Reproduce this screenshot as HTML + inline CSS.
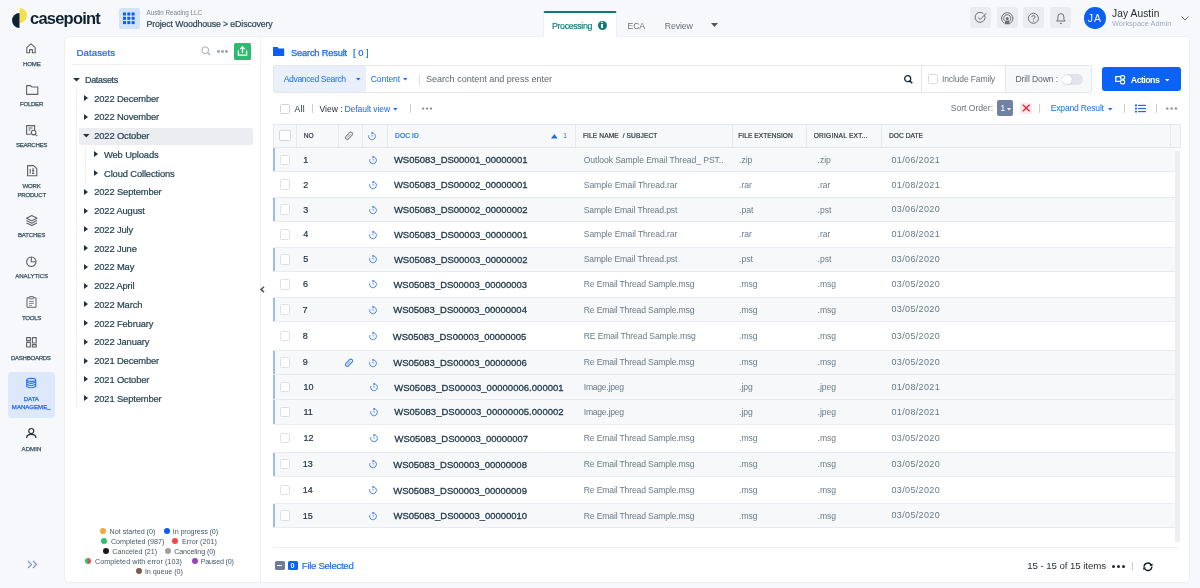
<!DOCTYPE html>
<html><head><meta charset="utf-8">
<style>
*{box-sizing:border-box;margin:0;padding:0}
html,body{width:1200px;height:588px;overflow:hidden;background:#f6f8fb;font-family:"Liberation Sans",sans-serif;color:#1f3647}
.a{position:absolute;white-space:pre}
svg.a{overflow:visible}
</style></head><body>
<div class="a" style="left:63.5px;top:36.2px;width:1126.0px;height:546.5999999999999px;background:#fff;border:1px solid #eceff3;border-radius:5px"></div>
<div class="a" style="left:260px;top:37px;width:1px;height:545px;background:#eef0f3"></div>
<svg class="a" style="left:11px;top:7px" width="18" height="22" viewBox="0 0 18 22"><path d="M8.5 1 A7.5 7.5 0 0 1 8.5 16 Z" fill="#f3e04a"/><path d="M8.5 6 A7.5 7.5 0 0 0 8.5 21 Z" fill="#0f2233"/></svg>
<div class="a" style="left:118.5px;top:7.5px;width:21.0px;height:21.0px;background:#d3e3fb;border-radius:2px"></div>
<svg class="a" style="left:118.3px;top:7.3px" width="21" height="21" viewBox="0 0 21 21"><g fill="#0a5cf5"><rect x="5.0" y="5.5" width="3" height="3"/><rect x="5.0" y="9.8" width="3" height="3"/><rect x="5.0" y="14.1" width="3" height="3"/><rect x="9.3" y="5.5" width="3" height="3"/><rect x="9.3" y="9.8" width="3" height="3"/><rect x="9.3" y="14.1" width="3" height="3"/><rect x="13.6" y="5.5" width="3" height="3"/><rect x="13.6" y="9.8" width="3" height="3"/><rect x="13.6" y="14.1" width="3" height="3"/></g></svg>
<div class="a" style="left:542.5px;top:11px;width:74.5px;height:26px;background:#fff;border-top:2px solid #0e7b78;border-left:1px solid #eef0f3;border-right:1px solid #eef0f3;border-radius:2px 2px 0 0"></div>
<div class="a" style="left:597.5px;top:20.5px;width:9px;height:9px;border-radius:50%;background:#0e7b78"></div>
<div class="a" style="left:601.3px;top:24px;width:1.400000000000091px;height:3.6000000000000014px;background:#fff"></div>
<div class="a" style="left:601.3px;top:22.2px;width:1.400000000000091px;height:1.1999999999999993px;background:#fff"></div>
<svg class="a" style="left:710.5px;top:23px" width="7" height="4" viewBox="0 0 7 4"><path d="M0 0 L7 0 L3.5 4 Z" fill="#50575e"/></svg>
<div class="a" style="left:970px;top:7.4px;width:21px;height:20.799999999999997px;background:#ebecef;border-radius:3px"></div>
<div class="a" style="left:996.6px;top:7.4px;width:21.0px;height:20.799999999999997px;background:#ebecef;border-radius:3px"></div>
<div class="a" style="left:1023px;top:7.4px;width:21px;height:20.799999999999997px;background:#ebecef;border-radius:3px"></div>
<div class="a" style="left:1050px;top:7.4px;width:21px;height:20.799999999999997px;background:#ebecef;border-radius:3px"></div>
<svg class="a" style="left:974.5px;top:12.3px" width="12" height="11" viewBox="0 0 12 11"><path d="M9.6 3.2 A5 5 0 1 1 8.4 1.6" fill="none" stroke="#6a6e73" stroke-width="1"/><path d="M3.2 5.6 L5.2 7.5 L11.2 1.2" fill="none" stroke="#6a6e73" stroke-width="1"/></svg>
<svg class="a" style="left:1000.8px;top:11.6px" width="12.5" height="12.5" viewBox="0 0 12.5 12.5"><path d="M3.2 11.2 A5.7 5.7 0 1 1 9.3 11.2" fill="none" stroke="#6a6e73" stroke-width="1"/><path d="M4.2 9.3 A3.6 3.6 0 1 1 8.3 9.3" fill="none" stroke="#6a6e73" stroke-width="1"/><circle cx="6.25" cy="6.6" r="1.5" fill="#6a6e73"/><path d="M3.6 12.3 L4.4 8.6 L8.1 8.6 L8.9 12.3 Z" fill="#6a6e73"/></svg>
<svg class="a" style="left:1028px;top:12.6px" width="11" height="11" viewBox="0 0 11 11"><circle cx="5.4" cy="5.3" r="5" fill="none" stroke="#6a6e73" stroke-width="1"/><path d="M3.8 4.2 Q3.8 2.5 5.4 2.5 Q7.1 2.5 7.1 4 Q7.1 5.1 5.6 5.6 L5.4 6.6" fill="none" stroke="#6a6e73" stroke-width="1"/><circle cx="5.4" cy="8.2" r="0.6" fill="#6a6e73"/></svg>
<svg class="a" style="left:1055.5px;top:12.6px" width="10" height="10.5" viewBox="0 0 10 10.5"><path d="M0.6 8 L9.2 8 L7.9 6.4 L7.9 4 Q7.9 0.6 4.9 0.6 Q1.9 0.6 1.9 4 L1.9 6.4 Z" fill="none" stroke="#6a6e73" stroke-width="1"/><path d="M3.9 10.3 L5.9 10.3" fill="none" stroke="#6a6e73" stroke-width="1"/></svg>
<div class="a" style="left:1084px;top:7px;width:21.6px;height:21.6px;border-radius:50%;background:#0b60f3"></div>
<svg class="a" style="left:1181px;top:15.5px" width="8" height="5" viewBox="0 0 8 5"><path d="M0.5 0.5 L4 4 L7.5 0.5" fill="none" stroke="#5c6670" stroke-width="1"/></svg>
<svg class="a" style="left:26.4px;top:42.8px" width="10" height="10.5" viewBox="0 0 10 10.5"><path d="M0.8 4.6 L5 0.8 L9.2 4.6 L9.2 9.8 L6.4 9.8 L6.4 6.6 L3.6 6.6 L3.6 9.8 L0.8 9.8 Z" fill="none" stroke="#5e6266" stroke-width="1.1" stroke-linejoin="round"/></svg>
<svg class="a" style="left:25.5px;top:84.5px" width="12.5" height="10" viewBox="0 0 12.5 10"><path d="M0.6 0.6 L4.6 0.6 L5.8 2 L11.8 2 L11.8 9.4 L0.6 9.4 Z" fill="none" stroke="#5e6266" stroke-width="1.1" stroke-linejoin="round"/></svg>
<svg class="a" style="left:26px;top:125px" width="12" height="11.5" viewBox="0 0 12 11.5"><path d="M8.6 5 L8.6 0.6 L0.6 0.6 L0.6 9.2 L4.8 9.2" fill="none" stroke="#5e6266" stroke-width="1.1" stroke-linejoin="round"/><path d="M2.5 3 L6.5 3 M2.5 5 L4.5 5" fill="none" stroke="#5e6266" stroke-width="1.1" stroke-linejoin="round"/><circle cx="7.6" cy="7.6" r="2.3" fill="none" stroke="#5e6266" stroke-width="1.1" stroke-linejoin="round"/><path d="M9.3 9.3 L11.2 11.2" fill="none" stroke="#5e6266" stroke-width="1.1" stroke-linejoin="round"/></svg>
<svg class="a" style="left:26.7px;top:165px" width="10.5" height="11.5" viewBox="0 0 10.5 11.5"><path d="M0.6 0.6 L6.6 0.6 L9.8 3.6 L9.8 10.8 L0.6 10.8 Z" fill="none" stroke="#5e6266" stroke-width="1.1" stroke-linejoin="round"/><path d="M3.2 4 L3.2 8.4 M5 4 L7.2 4 M5 5.5 L7.2 5.5 M5 7 L7.2 7 M5 8.5 L7.2 8.5" fill="none" stroke="#5e6266" stroke-width="1.1" stroke-linejoin="round"/></svg>
<svg class="a" style="left:26px;top:214.5px" width="11.5" height="11.5" viewBox="0 0 11.5 11.5"><path d="M5.75 0.6 L11 3.2 L5.75 5.8 L0.5 3.2 Z" fill="none" stroke="#5e6266" stroke-width="1.1" stroke-linejoin="round"/><path d="M0.5 5.6 L5.75 8.2 L11 5.6 M0.5 8 L5.75 10.6 L11 8" fill="none" stroke="#5e6266" stroke-width="1.1" stroke-linejoin="round"/></svg>
<svg class="a" style="left:25.9px;top:255.8px" width="11" height="11" viewBox="0 0 11 11"><circle cx="5.3" cy="5.7" r="4.7" fill="none" stroke="#5e6266" stroke-width="1.1" stroke-linejoin="round"/><path d="M5.3 1 L5.3 5.7 L10 5.7" fill="none" stroke="#5e6266" stroke-width="1.1" stroke-linejoin="round"/></svg>
<svg class="a" style="left:26.4px;top:296px" width="11" height="12" viewBox="0 0 11 12"><path d="M3 1.8 L1 1.8 L1 11.3 L10 11.3 L10 1.8 L8 1.8" fill="none" stroke="#5e6266" stroke-width="1"/><rect x="3.3" y="0.6" width="4.4" height="2.2" rx="0.5" fill="none" stroke="#5e6266" stroke-width="1"/><path d="M3.2 5.4 L7.8 5.4 M3.2 7.4 L7.8 7.4 M3.2 9.4 L5.8 9.4" fill="none" stroke="#5e6266" stroke-width="0.8"/></svg>
<svg class="a" style="left:25.9px;top:337.3px" width="11" height="10.5" viewBox="0 0 11 10.5"><rect x="0.6" y="0.6" width="3.8" height="3" fill="none" stroke="#5e6266" stroke-width="1.1" stroke-linejoin="round"/><rect x="6.4" y="0.6" width="3.8" height="5.4" fill="none" stroke="#5e6266" stroke-width="1.1" stroke-linejoin="round"/><rect x="0.6" y="5.4" width="3.8" height="4.6" fill="none" stroke="#5e6266" stroke-width="1.1" stroke-linejoin="round"/><rect x="6.4" y="7.6" width="3.8" height="2.4" fill="none" stroke="#5e6266" stroke-width="1.1" stroke-linejoin="round"/></svg>
<div class="a" style="left:8.2px;top:371.9px;width:46.599999999999994px;height:46.30000000000001px;background:#dde8fb;border-radius:4px"></div>
<svg class="a" style="left:26.4px;top:378.4px" width="10.5" height="10.5" viewBox="0 0 10.5 10.5"><ellipse cx="5.2" cy="1.9" rx="4.5" ry="1.5" fill="none" stroke="#2a6ff0" stroke-width="1.1"/><path d="M0.7 1.9 L0.7 8.4 Q5.2 11 9.7 8.4 L9.7 1.9 M0.7 4.1 Q5.2 6.6 9.7 4.1 M0.7 6.3 Q5.2 8.8 9.7 6.3" fill="none" stroke="#2a6ff0" stroke-width="1.1"/></svg>
<svg class="a" style="left:26.4px;top:428px" width="10.5" height="10.5" viewBox="0 0 10.5 10.5"><circle cx="5.25" cy="3" r="2.5" fill="none" stroke="#23313c" stroke-width="1.2"/><path d="M0.6 10 Q0.6 6.4 5.25 6.4 Q9.9 6.4 9.9 10" fill="none" stroke="#23313c" stroke-width="1.2"/></svg>
<svg class="a" style="left:26.5px;top:560px" width="11" height="9" viewBox="0 0 11 9"><path d="M1 1 L4.5 4.5 L1 8 M6 1 L9.5 4.5 L6 8" fill="none" stroke="#7d92c2" stroke-width="1.1"/></svg>
<svg class="a" style="left:201px;top:46.3px" width="10" height="10" viewBox="0 0 10 10"><circle cx="4.2" cy="4.2" r="3.4" fill="none" stroke="#a4aab3" stroke-width="1"/><path d="M6.7 6.7 L9 9" stroke="#a4aab3" stroke-width="1.1"/></svg>
<div class="a" style="left:217.2px;top:49.8px;width:2.8px;height:2.8px;border-radius:50%;background:#a0a7b1"></div>
<div class="a" style="left:221.0px;top:49.8px;width:2.8px;height:2.8px;border-radius:50%;background:#a0a7b1"></div>
<div class="a" style="left:224.8px;top:49.8px;width:2.8px;height:2.8px;border-radius:50%;background:#a0a7b1"></div>
<div class="a" style="left:234px;top:43.3px;width:17px;height:16.400000000000006px;background:#2fbb6f;border-radius:1.5px"></div>
<svg class="a" style="left:234px;top:43.3px" width="17" height="16.4" viewBox="0 0 17 16.4"><path d="M4.4 7.6 L4.4 12.2 L12.6 12.2 L12.6 7.6" fill="none" stroke="#fff" stroke-width="1.3"/><path d="M8.5 10 L8.5 4 M6.2 6.1 L8.5 3.8 L10.8 6.1" fill="none" stroke="#fff" stroke-width="1.3"/></svg>
<div class="a" style="left:72px;top:64px;width:178px;height:1px;background:#eceef1"></div>
<svg class="a" style="left:72.5px;top:78.3px" width="7" height="4" viewBox="0 0 7 4"><path d="M0 0 L7 0 L3.5 3.5 Z" fill="#1e3443"/></svg>
<div class="a" style="left:76px;top:89px;width:1px;height:318px;background:#f0f1f3"></div>
<div class="a" style="left:79.2px;top:127.6px;width:173.8px;height:17.30000000000001px;background:#ebedf0;border-radius:2px"></div>
<div class="a" style="left:85px;top:145.5px;width:1px;height:37.5px;background:#f0f1f3"></div>
<svg class="a" style="left:84.2px;top:95.2px" width="4.2" height="6" viewBox="0 0 4.2 6"><path d="M0 0 L4 3 L0 6 Z" fill="#1e3443"/></svg>
<svg class="a" style="left:84.2px;top:113.95px" width="4.2" height="6" viewBox="0 0 4.2 6"><path d="M0 0 L4 3 L0 6 Z" fill="#1e3443"/></svg>
<svg class="a" style="left:82.5px;top:133.89999999999998px" width="6.5" height="4" viewBox="0 0 6.5 4"><path d="M0 0 L6.5 0 L3.25 3.5 Z" fill="#1e3443"/></svg>
<svg class="a" style="left:93.5px;top:151.45px" width="4.2" height="6" viewBox="0 0 4.2 6"><path d="M0 0 L4 3 L0 6 Z" fill="#1e3443"/></svg>
<svg class="a" style="left:93.5px;top:170.2px" width="4.2" height="6" viewBox="0 0 4.2 6"><path d="M0 0 L4 3 L0 6 Z" fill="#1e3443"/></svg>
<svg class="a" style="left:84.2px;top:188.95px" width="4.2" height="6" viewBox="0 0 4.2 6"><path d="M0 0 L4 3 L0 6 Z" fill="#1e3443"/></svg>
<svg class="a" style="left:84.2px;top:207.7px" width="4.2" height="6" viewBox="0 0 4.2 6"><path d="M0 0 L4 3 L0 6 Z" fill="#1e3443"/></svg>
<svg class="a" style="left:84.2px;top:226.45px" width="4.2" height="6" viewBox="0 0 4.2 6"><path d="M0 0 L4 3 L0 6 Z" fill="#1e3443"/></svg>
<svg class="a" style="left:84.2px;top:245.2px" width="4.2" height="6" viewBox="0 0 4.2 6"><path d="M0 0 L4 3 L0 6 Z" fill="#1e3443"/></svg>
<svg class="a" style="left:84.2px;top:263.95px" width="4.2" height="6" viewBox="0 0 4.2 6"><path d="M0 0 L4 3 L0 6 Z" fill="#1e3443"/></svg>
<svg class="a" style="left:84.2px;top:282.7px" width="4.2" height="6" viewBox="0 0 4.2 6"><path d="M0 0 L4 3 L0 6 Z" fill="#1e3443"/></svg>
<svg class="a" style="left:84.2px;top:301.45px" width="4.2" height="6" viewBox="0 0 4.2 6"><path d="M0 0 L4 3 L0 6 Z" fill="#1e3443"/></svg>
<svg class="a" style="left:84.2px;top:320.2px" width="4.2" height="6" viewBox="0 0 4.2 6"><path d="M0 0 L4 3 L0 6 Z" fill="#1e3443"/></svg>
<svg class="a" style="left:84.2px;top:338.95px" width="4.2" height="6" viewBox="0 0 4.2 6"><path d="M0 0 L4 3 L0 6 Z" fill="#1e3443"/></svg>
<svg class="a" style="left:84.2px;top:357.7px" width="4.2" height="6" viewBox="0 0 4.2 6"><path d="M0 0 L4 3 L0 6 Z" fill="#1e3443"/></svg>
<svg class="a" style="left:84.2px;top:376.45px" width="4.2" height="6" viewBox="0 0 4.2 6"><path d="M0 0 L4 3 L0 6 Z" fill="#1e3443"/></svg>
<svg class="a" style="left:84.2px;top:395.2px" width="4.2" height="6" viewBox="0 0 4.2 6"><path d="M0 0 L4 3 L0 6 Z" fill="#1e3443"/></svg>
<svg class="a" style="left:259.5px;top:285.8px" width="5" height="7" viewBox="0 0 5 7"><path d="M4 0.7 L1 3.4 L4 6.1" fill="none" stroke="#4d535c" stroke-width="1.5"/></svg>
<div class="a" style="left:99.8px;top:528.3px;width:6px;height:6px;border-radius:50%;background:#f5a83c"></div>
<div class="a" style="left:163.6px;top:528.3px;width:6px;height:6px;border-radius:50%;background:#0b5cf5"></div>
<div class="a" style="left:101px;top:538.2px;width:6px;height:6px;border-radius:50%;background:#2fbf71"></div>
<div class="a" style="left:172.4px;top:538.2px;width:6px;height:6px;border-radius:50%;background:#f2484b"></div>
<div class="a" style="left:103px;top:548.2px;width:6px;height:6px;border-radius:50%;background:#1a1a1a"></div>
<div class="a" style="left:164.7px;top:548.2px;width:6px;height:6px;border-radius:50%;background:#a39e96"></div>
<div class="a" style="left:85.4px;top:558.4px;width:6px;height:6px;border-radius:50%;background:linear-gradient(90deg,#2fbf71 50%,#f2484b 50%)"></div>
<div class="a" style="left:191.9px;top:558.4px;width:6px;height:6px;border-radius:50%;background:#9b3fc2"></div>
<div class="a" style="left:136px;top:568.3px;width:6px;height:6px;border-radius:50%;background:#7d5d4f"></div>
<svg class="a" style="left:273px;top:47px" width="11.2" height="9" viewBox="0 0 11.2 9"><path d="M0 0 L4.6 0 L5.6 1.6 L11.2 1.6 L11.2 9 L0 9 Z" fill="#0b5cf5"/></svg>
<div class="a" style="left:273px;top:65px;width:819px;height:27.5px;border:1px solid #e4e7eb;border-radius:2px;background:#fff"></div>
<div class="a" style="left:274px;top:66px;width:92px;height:25.5px;background:#e9f0fc"></div>
<svg class="a" style="left:355.5px;top:78px" width="4.5" height="3" viewBox="0 0 4.5 3"><path d="M0 0 L4.5 0 L2.25 2.6 Z" fill="#1e6bef"/></svg>
<svg class="a" style="left:402.5px;top:78px" width="4.5" height="3" viewBox="0 0 4.5 3"><path d="M0 0 L4.5 0 L2.25 2.6 Z" fill="#1e6bef"/></svg>
<div class="a" style="left:418.5px;top:74px;width:0.8000000000000114px;height:12px;background:#dfe2e6"></div>
<svg class="a" style="left:903.8px;top:75px" width="9" height="9" viewBox="0 0 9 9"><circle cx="3.7" cy="3.7" r="3" fill="none" stroke="#1b2a36" stroke-width="1.3"/><path d="M5.9 5.9 L8.3 8.3" stroke="#1b2a36" stroke-width="1.5"/></svg>
<div class="a" style="left:921px;top:66px;width:1px;height:25.5px;background:#e4e7eb"></div>
<div class="a" style="left:928px;top:74px;width:10px;height:10px;border:1px solid #d7dbe0;border-radius:1.5px;background:#fff"></div>
<div class="a" style="left:1005px;top:66px;width:86px;height:25.5px;background:#f7f8fa;border-left:1px solid #e4e7eb"></div>
<div class="a" style="left:1061.5px;top:73.8px;width:21.0px;height:11.200000000000003px;background:#e1e4e8;border-radius:6px"></div>
<div class="a" style="left:1062.3px;top:74.6px;width:9.6px;height:9.6px;border-radius:50%;background:#fff;box-shadow:0 0 1px rgba(0,0,0,.3)"></div>
<div class="a" style="left:1102px;top:67px;width:78.5px;height:24.299999999999997px;background:#0b62f4;border-radius:3px"></div>
<svg class="a" style="left:1114.6px;top:75.2px" width="10.5" height="9.5" viewBox="0 0 10.5 9.5"><path d="M5.2 1.6 L0.8 1.6 L0.8 6.4 L5.2 6.4" fill="none" stroke="#fff" stroke-width="1.3"/><rect x="5.6" y="0.6" width="4" height="3.6" rx="1.3" fill="none" stroke="#fff" stroke-width="1.2"/><rect x="5.6" y="5.2" width="4" height="3.6" rx="1.3" fill="none" stroke="#fff" stroke-width="1.2"/></svg>
<svg class="a" style="left:1165.4px;top:78.8px" width="4.5" height="3" viewBox="0 0 4.5 3"><path d="M0 0 L4.5 0 L2.25 2.6 Z" fill="#fff"/></svg>
<div class="a" style="left:280px;top:103.8px;width:10.199999999999989px;height:10.0px;border:1px solid #cfd4da;border-radius:1.5px;background:#fff"></div>
<div class="a" style="left:312.3px;top:103.5px;width:0.8000000000000114px;height:9.5px;background:#c9cdd2"></div>
<svg class="a" style="left:392.5px;top:108px" width="4.5" height="3" viewBox="0 0 4.5 3"><path d="M0 0 L4.5 0 L2.25 2.6 Z" fill="#1e6bef"/></svg>
<div class="a" style="left:410.3px;top:103.5px;width:0.8000000000000114px;height:9.5px;background:#c9cdd2"></div>
<svg class="a" style="left:421.8px;top:106.8px" width="12" height="4" viewBox="0 0 12 4"><circle cx="1.2" cy="1.6" r="1.15" fill="#80868d"/><circle cx="5.1" cy="1.6" r="1.15" fill="#80868d"/><circle cx="9.0" cy="1.6" r="1.15" fill="#80868d"/></svg>
<div class="a" style="left:997px;top:100px;width:16.299999999999955px;height:15.5px;background:#6f81a4;border-radius:2px"></div>
<svg class="a" style="left:1006.5px;top:107.5px" width="4" height="2.6" viewBox="0 0 4 2.6"><path d="M0 0 L4 0 L2 2.4 Z" fill="#fff"/></svg>
<div class="a" style="left:1020px;top:102.5px;width:11.799999999999955px;height:11.299999999999997px;background:#fde6e8;border-radius:2px"></div>
<svg class="a" style="left:1021.8px;top:104.3px" width="8.4" height="8" viewBox="0 0 8.4 8"><path d="M0.8 0.8 L7.6 7.2 M7.6 0.8 L0.8 7.2" stroke="#e0212f" stroke-width="1.2"/></svg>
<div class="a" style="left:1039.3px;top:103.5px;width:0.7999999999999545px;height:9.5px;background:#c9cdd2"></div>
<svg class="a" style="left:1108px;top:107.5px" width="4.5" height="3" viewBox="0 0 4.5 3"><path d="M0 0 L4.5 0 L2.25 2.6 Z" fill="#1e6bef"/></svg>
<div class="a" style="left:1123.5px;top:103.5px;width:0.7999999999999545px;height:9.5px;background:#c9cdd2"></div>
<svg class="a" style="left:1134.5px;top:103.5px" width="11" height="9" viewBox="0 0 11 9"><g fill="#1e6bef"><rect x="0" y="0.5" width="2" height="1.8"/><rect x="0" y="3.6" width="2" height="1.8"/><rect x="0" y="6.7" width="2" height="1.8"/><rect x="3" y="0.8" width="8" height="1.2"/><rect x="3" y="3.9" width="8" height="1.2"/><rect x="3" y="7" width="8" height="1.2"/></g></svg>
<div class="a" style="left:1156px;top:103.5px;width:0.7999999999999545px;height:9.5px;background:#c9cdd2"></div>
<svg class="a" style="left:1166px;top:106.5px" width="12" height="4" viewBox="0 0 12 4"><circle cx="1.3" cy="1.6" r="1.25" fill="#8f959c"/><circle cx="5.6" cy="1.6" r="1.25" fill="#8f959c"/><circle cx="9.9" cy="1.6" r="1.25" fill="#8f959c"/></svg>
<div class="a" style="left:273px;top:123.5px;width:907.5px;height:24.099999999999994px;background:#f7f8fa;border:1px solid #e6e9ed;border-bottom:1px solid #e3e6ea"></div>
<div class="a" style="left:296px;top:124.5px;width:1px;height:22.25px;background:#e6e9ed"></div>
<div class="a" style="left:338.4px;top:124.5px;width:1.0px;height:22.25px;background:#e6e9ed"></div>
<div class="a" style="left:362px;top:124.5px;width:1px;height:22.25px;background:#e6e9ed"></div>
<div class="a" style="left:387.2px;top:124.5px;width:1.0px;height:22.25px;background:#e6e9ed"></div>
<div class="a" style="left:575px;top:124.5px;width:1px;height:22.25px;background:#e6e9ed"></div>
<div class="a" style="left:732px;top:124.5px;width:1px;height:22.25px;background:#e6e9ed"></div>
<div class="a" style="left:806px;top:124.5px;width:1px;height:22.25px;background:#e6e9ed"></div>
<div class="a" style="left:881px;top:124.5px;width:1px;height:22.25px;background:#e6e9ed"></div>
<div class="a" style="left:1170.2px;top:124.5px;width:1.0px;height:22.25px;background:#e6e9ed"></div>
<div class="a" style="left:279px;top:129.8px;width:11.600000000000023px;height:11.599999999999994px;border:1px solid #d2d7dd;border-radius:1.5px;background:#fff"></div>
<svg class="a" style="left:344.5px;top:132px" width="8" height="7.5" viewBox="0 0 8 7.5"><g transform="rotate(-45 4 3.75)"><rect x="-0.3" y="2" width="8.6" height="3.5" rx="1.75" fill="none" stroke="#80858b" stroke-width="1.1"/><path d="M1.5 3.75 L6 3.75" stroke="#80858b" stroke-width="0.8"/></g></svg>
<svg class="a" style="left:368.3px;top:132px" width="9" height="9" viewBox="0 0 9 9"><path d="M4 0.9 A3.4 3.4 0 1 1 0.8 3.2" fill="none" stroke="#3a7bef" stroke-width="0.95"/><circle cx="4" cy="0.9" r="0.85" fill="#3a7bef"/><path d="M3.9 2.6 L4.2 4.7" fill="none" stroke="#3a7bef" stroke-width="0.8"/></svg>
<svg class="a" style="left:551.3px;top:133.6px" width="6.7" height="4.5" viewBox="0 0 6.7 4.5"><path d="M0 4.5 L3.35 0 L6.7 4.5 Z" fill="#1e6bef"/></svg>
<div class="a" style="left:273px;top:147.6px;width:902px;height:24.900000000000006px;background:#f7f8fa;border-bottom:1px solid #e8ebef"></div>
<div class="a" style="left:273px;top:147.6px;width:2px;height:23.900000000000006px;background:#9dbbf3"></div>
<div class="a" style="left:280px;top:154.5px;width:10.399999999999977px;height:10.400000000000006px;border:1px solid #dde1e6;border-radius:1.5px;background:#fff"></div>
<svg class="a" style="left:368.6px;top:155.8px" width="9" height="9" viewBox="0 0 9 9"><path d="M4 0.9 A3.4 3.4 0 1 1 0.8 3.2" fill="none" stroke="#3a7bef" stroke-width="0.95"/><circle cx="4" cy="0.9" r="0.85" fill="#3a7bef"/><path d="M3.9 2.6 L4.2 4.7" fill="none" stroke="#3a7bef" stroke-width="0.8"/></svg>
<div class="a" style="left:273px;top:172.5px;width:902px;height:25.5px;background:#ffffff;border-bottom:1px solid #e8ebef"></div>
<div class="a" style="left:280px;top:179.45px;width:10.399999999999977px;height:10.400000000000006px;border:1px solid #dde1e6;border-radius:1.5px;background:#fff"></div>
<svg class="a" style="left:368.6px;top:180.75px" width="9" height="9" viewBox="0 0 9 9"><path d="M4 0.9 A3.4 3.4 0 1 1 0.8 3.2" fill="none" stroke="#3a7bef" stroke-width="0.95"/><circle cx="4" cy="0.9" r="0.85" fill="#3a7bef"/><path d="M3.9 2.6 L4.2 4.7" fill="none" stroke="#3a7bef" stroke-width="0.8"/></svg>
<div class="a" style="left:273px;top:198.0px;width:902px;height:24.30000000000001px;background:#f7f8fa;border-bottom:1px solid #e8ebef"></div>
<div class="a" style="left:273px;top:198.0px;width:2px;height:23.30000000000001px;background:#9dbbf3"></div>
<div class="a" style="left:280px;top:204.35px;width:10.399999999999977px;height:10.400000000000006px;border:1px solid #dde1e6;border-radius:1.5px;background:#fff"></div>
<svg class="a" style="left:368.8px;top:205.65px" width="9" height="9" viewBox="0 0 9 9"><path d="M4 0.9 A3.4 3.4 0 1 1 0.8 3.2" fill="none" stroke="#3a7bef" stroke-width="0.95"/><circle cx="4" cy="0.9" r="0.85" fill="#3a7bef"/><path d="M3.9 2.6 L4.2 4.7" fill="none" stroke="#3a7bef" stroke-width="0.8"/></svg>
<div class="a" style="left:273px;top:222.3px;width:902px;height:25.5px;background:#ffffff;border-bottom:1px solid #e8ebef"></div>
<div class="a" style="left:280px;top:229.25px;width:10.399999999999977px;height:10.400000000000006px;border:1px solid #dde1e6;border-radius:1.5px;background:#fff"></div>
<svg class="a" style="left:368.8px;top:230.55px" width="9" height="9" viewBox="0 0 9 9"><path d="M4 0.9 A3.4 3.4 0 1 1 0.8 3.2" fill="none" stroke="#3a7bef" stroke-width="0.95"/><circle cx="4" cy="0.9" r="0.85" fill="#3a7bef"/><path d="M3.9 2.6 L4.2 4.7" fill="none" stroke="#3a7bef" stroke-width="0.8"/></svg>
<div class="a" style="left:273px;top:247.8px;width:902px;height:24.30000000000001px;background:#f7f8fa;border-bottom:1px solid #e8ebef"></div>
<div class="a" style="left:273px;top:247.8px;width:2px;height:23.30000000000001px;background:#9dbbf3"></div>
<div class="a" style="left:280px;top:254.15000000000003px;width:10.399999999999977px;height:10.400000000000034px;border:1px solid #dde1e6;border-radius:1.5px;background:#fff"></div>
<svg class="a" style="left:368.8px;top:255.45000000000005px" width="9" height="9" viewBox="0 0 9 9"><path d="M4 0.9 A3.4 3.4 0 1 1 0.8 3.2" fill="none" stroke="#3a7bef" stroke-width="0.95"/><circle cx="4" cy="0.9" r="0.85" fill="#3a7bef"/><path d="M3.9 2.6 L4.2 4.7" fill="none" stroke="#3a7bef" stroke-width="0.8"/></svg>
<div class="a" style="left:273px;top:272.1px;width:902px;height:25.69999999999999px;background:#ffffff;border-bottom:1px solid #e8ebef"></div>
<div class="a" style="left:280px;top:279.15000000000003px;width:10.399999999999977px;height:10.400000000000034px;border:1px solid #dde1e6;border-radius:1.5px;background:#fff"></div>
<svg class="a" style="left:368.8px;top:280.45000000000005px" width="9" height="9" viewBox="0 0 9 9"><path d="M4 0.9 A3.4 3.4 0 1 1 0.8 3.2" fill="none" stroke="#3a7bef" stroke-width="0.95"/><circle cx="4" cy="0.9" r="0.85" fill="#3a7bef"/><path d="M3.9 2.6 L4.2 4.7" fill="none" stroke="#3a7bef" stroke-width="0.8"/></svg>
<div class="a" style="left:273px;top:297.8px;width:902px;height:24.69999999999999px;background:#f7f8fa;border-bottom:1px solid #e8ebef"></div>
<div class="a" style="left:273px;top:297.8px;width:2px;height:23.69999999999999px;background:#9dbbf3"></div>
<div class="a" style="left:280px;top:304.34999999999997px;width:10.399999999999977px;height:10.400000000000034px;border:1px solid #dde1e6;border-radius:1.5px;background:#fff"></div>
<svg class="a" style="left:368.6px;top:305.65px" width="9" height="9" viewBox="0 0 9 9"><path d="M4 0.9 A3.4 3.4 0 1 1 0.8 3.2" fill="none" stroke="#3a7bef" stroke-width="0.95"/><circle cx="4" cy="0.9" r="0.85" fill="#3a7bef"/><path d="M3.9 2.6 L4.2 4.7" fill="none" stroke="#3a7bef" stroke-width="0.8"/></svg>
<div class="a" style="left:273px;top:322.5px;width:902px;height:28.399999999999977px;background:#ffffff;border-bottom:1px solid #e8ebef"></div>
<div class="a" style="left:280px;top:330.9px;width:10.399999999999977px;height:10.400000000000034px;border:1px solid #dde1e6;border-radius:1.5px;background:#fff"></div>
<svg class="a" style="left:368.6px;top:332.2px" width="9" height="9" viewBox="0 0 9 9"><path d="M4 0.9 A3.4 3.4 0 1 1 0.8 3.2" fill="none" stroke="#3a7bef" stroke-width="0.95"/><circle cx="4" cy="0.9" r="0.85" fill="#3a7bef"/><path d="M3.9 2.6 L4.2 4.7" fill="none" stroke="#3a7bef" stroke-width="0.8"/></svg>
<div class="a" style="left:273px;top:350.9px;width:902px;height:24.30000000000001px;background:#f7f8fa;border-bottom:1px solid #e8ebef"></div>
<div class="a" style="left:273px;top:350.9px;width:2px;height:23.30000000000001px;background:#9dbbf3"></div>
<div class="a" style="left:280px;top:357.24999999999994px;width:10.399999999999977px;height:10.400000000000034px;border:1px solid #dde1e6;border-radius:1.5px;background:#fff"></div>
<svg class="a" style="left:344.8px;top:358.94999999999993px" width="8" height="7.5" viewBox="0 0 8 7.5"><g transform="rotate(-45 4 3.75)"><rect x="-0.3" y="2" width="8.6" height="3.5" rx="1.75" fill="none" stroke="#3a7bef" stroke-width="1.1"/><path d="M1.5 3.75 L6 3.75" stroke="#3a7bef" stroke-width="0.8"/></g></svg>
<svg class="a" style="left:368.6px;top:358.54999999999995px" width="9" height="9" viewBox="0 0 9 9"><path d="M4 0.9 A3.4 3.4 0 1 1 0.8 3.2" fill="none" stroke="#3a7bef" stroke-width="0.95"/><circle cx="4" cy="0.9" r="0.85" fill="#3a7bef"/><path d="M3.9 2.6 L4.2 4.7" fill="none" stroke="#3a7bef" stroke-width="0.8"/></svg>
<div class="a" style="left:273px;top:375.2px;width:902px;height:24.80000000000001px;background:#f7f8fa;border-bottom:1px solid #e8ebef"></div>
<div class="a" style="left:273px;top:375.2px;width:2px;height:23.80000000000001px;background:#9dbbf3"></div>
<div class="a" style="left:280px;top:381.8px;width:10.399999999999977px;height:10.400000000000034px;border:1px solid #dde1e6;border-radius:1.5px;background:#fff"></div>
<svg class="a" style="left:369.6px;top:383.1px" width="9" height="9" viewBox="0 0 9 9"><path d="M4 0.9 A3.4 3.4 0 1 1 0.8 3.2" fill="none" stroke="#3a7bef" stroke-width="0.95"/><circle cx="4" cy="0.9" r="0.85" fill="#3a7bef"/><path d="M3.9 2.6 L4.2 4.7" fill="none" stroke="#3a7bef" stroke-width="0.8"/></svg>
<div class="a" style="left:273px;top:400.0px;width:902px;height:24.69999999999999px;background:#f7f8fa;border-bottom:1px solid #e8ebef"></div>
<div class="a" style="left:273px;top:400.0px;width:2px;height:23.69999999999999px;background:#9dbbf3"></div>
<div class="a" style="left:280px;top:406.55px;width:10.399999999999977px;height:10.400000000000034px;border:1px solid #dde1e6;border-radius:1.5px;background:#fff"></div>
<svg class="a" style="left:369.6px;top:407.85px" width="9" height="9" viewBox="0 0 9 9"><path d="M4 0.9 A3.4 3.4 0 1 1 0.8 3.2" fill="none" stroke="#3a7bef" stroke-width="0.95"/><circle cx="4" cy="0.9" r="0.85" fill="#3a7bef"/><path d="M3.9 2.6 L4.2 4.7" fill="none" stroke="#3a7bef" stroke-width="0.8"/></svg>
<div class="a" style="left:273px;top:424.7px;width:902px;height:28.0px;background:#ffffff;border-bottom:1px solid #e8ebef"></div>
<div class="a" style="left:280px;top:432.9px;width:10.399999999999977px;height:10.400000000000034px;border:1px solid #dde1e6;border-radius:1.5px;background:#fff"></div>
<svg class="a" style="left:369.6px;top:434.2px" width="9" height="9" viewBox="0 0 9 9"><path d="M4 0.9 A3.4 3.4 0 1 1 0.8 3.2" fill="none" stroke="#3a7bef" stroke-width="0.95"/><circle cx="4" cy="0.9" r="0.85" fill="#3a7bef"/><path d="M3.9 2.6 L4.2 4.7" fill="none" stroke="#3a7bef" stroke-width="0.8"/></svg>
<div class="a" style="left:273px;top:452.7px;width:902px;height:24.400000000000034px;background:#f7f8fa;border-bottom:1px solid #e8ebef"></div>
<div class="a" style="left:273px;top:452.7px;width:2px;height:23.400000000000034px;background:#9dbbf3"></div>
<div class="a" style="left:280px;top:459.09999999999997px;width:10.399999999999977px;height:10.400000000000034px;border:1px solid #dde1e6;border-radius:1.5px;background:#fff"></div>
<svg class="a" style="left:368.9px;top:460.4px" width="9" height="9" viewBox="0 0 9 9"><path d="M4 0.9 A3.4 3.4 0 1 1 0.8 3.2" fill="none" stroke="#3a7bef" stroke-width="0.95"/><circle cx="4" cy="0.9" r="0.85" fill="#3a7bef"/><path d="M3.9 2.6 L4.2 4.7" fill="none" stroke="#3a7bef" stroke-width="0.8"/></svg>
<div class="a" style="left:273px;top:477.1px;width:902px;height:26.799999999999955px;background:#ffffff;border-bottom:1px solid #e8ebef"></div>
<div class="a" style="left:280px;top:484.7px;width:10.399999999999977px;height:10.400000000000034px;border:1px solid #dde1e6;border-radius:1.5px;background:#fff"></div>
<svg class="a" style="left:368.9px;top:486.0px" width="9" height="9" viewBox="0 0 9 9"><path d="M4 0.9 A3.4 3.4 0 1 1 0.8 3.2" fill="none" stroke="#3a7bef" stroke-width="0.95"/><circle cx="4" cy="0.9" r="0.85" fill="#3a7bef"/><path d="M3.9 2.6 L4.2 4.7" fill="none" stroke="#3a7bef" stroke-width="0.8"/></svg>
<div class="a" style="left:273px;top:503.9px;width:902px;height:24.5px;background:#f7f8fa;border-bottom:1px solid #e8ebef"></div>
<div class="a" style="left:273px;top:503.9px;width:2px;height:23.5px;background:#9dbbf3"></div>
<div class="a" style="left:280px;top:510.34999999999997px;width:10.399999999999977px;height:10.400000000000034px;border:1px solid #dde1e6;border-radius:1.5px;background:#fff"></div>
<svg class="a" style="left:368.9px;top:511.65px" width="9" height="9" viewBox="0 0 9 9"><path d="M4 0.9 A3.4 3.4 0 1 1 0.8 3.2" fill="none" stroke="#3a7bef" stroke-width="0.95"/><circle cx="4" cy="0.9" r="0.85" fill="#3a7bef"/><path d="M3.9 2.6 L4.2 4.7" fill="none" stroke="#3a7bef" stroke-width="0.8"/></svg>
<div class="a" style="left:1175px;top:150.5px;width:5px;height:391.0px;background:#eceef1"></div>
<div class="a" style="left:272.7px;top:546.8px;width:905.3px;height:0.8000000000000682px;background:#eceef1"></div>
<div class="a" style="left:274.7px;top:560.5px;width:10.0px;height:9.799999999999955px;background:#6e7c97;border-radius:1.5px"></div>
<div class="a" style="left:277px;top:565px;width:5.399999999999977px;height:1.2000000000000455px;background:#fff"></div>
<div class="a" style="left:287.7px;top:560.5px;width:10.0px;height:9.799999999999955px;background:#0b62f4;border-radius:1.5px"></div>
<div class="a" style="left:1111.8px;top:565px;width:3px;height:3px;border-radius:50%;background:#1f2b35"></div>
<div class="a" style="left:1116.8px;top:565px;width:3px;height:3px;border-radius:50%;background:#1f2b35"></div>
<div class="a" style="left:1121.8px;top:565px;width:3px;height:3px;border-radius:50%;background:#1f2b35"></div>
<div class="a" style="left:1131.5px;top:562px;width:0.7999999999999545px;height:8px;background:#c9cdd2"></div>
<svg class="a" style="left:1142.6px;top:561.6px" width="10" height="9.5" viewBox="0 0 10 9.5"><path d="M1 4.6 A3.9 3.9 0 0 1 8.3 3.1" fill="none" stroke="#10181f" stroke-width="1.4"/><path d="M8.8 5 A3.9 3.9 0 0 1 1.5 6.5" fill="none" stroke="#10181f" stroke-width="1.4"/><path d="M9.6 1.6 L9.4 4.6 L6.6 3.8 Z" fill="#10181f"/><path d="M0.2 8 L0.4 5 L3.2 5.8 Z" fill="#10181f"/></svg>
<div id="tx" style="position:absolute;left:0;top:0;width:1200px;height:588px;will-change:transform"><div class="a t" style="left:30px;top:9.67px;font-size:16.5px;line-height:16.5px;font-weight:bold;color:#0f2233;letter-spacing:-0.781px;">casepoint</div>
<div class="a t" style="left:146.5px;top:9.58px;font-size:6.4px;line-height:6.4px;font-weight:normal;color:#7d868f;letter-spacing:-0.075px;">Austin Reading LLC</div>
<div class="a t" style="left:146.5px;top:20.49px;font-size:8.8px;line-height:8.8px;font-weight:normal;color:#2a4555;letter-spacing:-0.139px;-webkit-text-stroke:0.2px #2a4555">Project Woodhouse &gt; eDiscovery</div>
<div class="a t" style="left:552px;top:21.78px;font-size:8.9px;line-height:8.9px;font-weight:normal;color:#187f7b;letter-spacing:-0.391px;-webkit-text-stroke:0.2px #187f7b">Processing</div>
<div class="a t" style="left:627.5px;top:21.79px;font-size:8.8px;line-height:8.8px;font-weight:normal;color:#6b7176;letter-spacing:-0.198px;">ECA</div>
<div class="a t" style="left:664.7px;top:21.79px;font-size:8.8px;line-height:8.8px;font-weight:normal;color:#6b7176;letter-spacing:-0.141px;">Review</div>
<div class="a t" style="left:1087.8px;top:12.62px;font-size:10.5px;line-height:10.5px;font-weight:normal;color:#ffffff;letter-spacing:0.867px;">JA</div>
<div class="a t" style="left:1112px;top:8.57px;font-size:10.2px;line-height:10.2px;font-weight:normal;color:#1e262e;letter-spacing:0.096px;">Jay Austin</div>
<div class="a t" style="left:1112px;top:20.33px;font-size:7.3px;line-height:7.3px;font-weight:normal;color:#9ba8c9;letter-spacing:0.049px;">Workspace Admin</div>
<div class="a t" style="left:23.05px;top:60.62px;font-size:6.1px;line-height:6.1px;font-weight:normal;color:#36535f;letter-spacing:-0.195px;-webkit-text-stroke:0.25px #36535f">HOME</div>
<div class="a t" style="left:20.0px;top:100.92px;font-size:6.1px;line-height:6.1px;font-weight:normal;color:#36535f;letter-spacing:-0.286px;-webkit-text-stroke:0.25px #36535f">FOLDER</div>
<div class="a t" style="left:16.0px;top:142.42px;font-size:6.1px;line-height:6.1px;font-weight:normal;color:#36535f;letter-spacing:-0.316px;-webkit-text-stroke:0.25px #36535f">SEARCHES</div>
<div class="a t" style="left:22.450000000000003px;top:183.12px;font-size:6.1px;line-height:6.1px;font-weight:normal;color:#36535f;letter-spacing:-0.167px;-webkit-text-stroke:0.25px #36535f">WORK</div>
<div class="a t" style="left:17.45px;top:191.62px;font-size:6.1px;line-height:6.1px;font-weight:normal;color:#36535f;letter-spacing:-0.234px;-webkit-text-stroke:0.25px #36535f">PRODUCT</div>
<div class="a t" style="left:17.95px;top:232.12px;font-size:6.1px;line-height:6.1px;font-weight:normal;color:#36535f;letter-spacing:-0.178px;-webkit-text-stroke:0.25px #36535f">BATCHES</div>
<div class="a t" style="left:15.25px;top:273.42px;font-size:6.1px;line-height:6.1px;font-weight:normal;color:#36535f;letter-spacing:-0.080px;-webkit-text-stroke:0.25px #36535f">ANALYTICS</div>
<div class="a t" style="left:22.05px;top:314.62px;font-size:6.1px;line-height:6.1px;font-weight:normal;color:#36535f;letter-spacing:-0.289px;-webkit-text-stroke:0.25px #36535f">TOOLS</div>
<div class="a t" style="left:10.95px;top:355.22px;font-size:6.1px;line-height:6.1px;font-weight:normal;color:#36535f;letter-spacing:-0.297px;-webkit-text-stroke:0.25px #36535f">DASHBOARDS</div>
<div class="a t" style="left:23.8px;top:396.22px;font-size:6.1px;line-height:6.1px;font-weight:normal;color:#1c68f0;letter-spacing:-0.090px;-webkit-text-stroke:0.25px #1c68f0">DATA</div>
<div class="a t" style="left:11.849999999999998px;top:404.42px;font-size:6.1px;line-height:6.1px;font-weight:normal;color:#1c68f0;letter-spacing:-0.028px;-webkit-text-stroke:0.25px #1c68f0">MANAGEME_</div>
<div class="a t" style="left:21.6px;top:445.72px;font-size:6.1px;line-height:6.1px;font-weight:normal;color:#36535f;letter-spacing:0.032px;-webkit-text-stroke:0.25px #36535f">ADMIN</div>
<div class="a t" style="left:76.5px;top:48.45px;font-size:9.7px;line-height:9.7px;font-weight:normal;color:#1569f1;letter-spacing:0.058px;-webkit-text-stroke:0.2px #1569f1">Datasets</div>
<div class="a t" style="left:85px;top:76.46px;font-size:9.0px;line-height:9.0px;font-weight:normal;color:#264353;letter-spacing:-0.316px;-webkit-text-stroke:0.2px #264353">Datasets</div>
<div class="a t" style="left:94.2px;top:93.50px;font-size:9.4px;line-height:9.4px;font-weight:normal;color:#264353;letter-spacing:-0.14px;-webkit-text-stroke:0.2px #264353">2022 December</div>
<div class="a t" style="left:94.2px;top:112.25px;font-size:9.4px;line-height:9.4px;font-weight:normal;color:#264353;letter-spacing:-0.14px;-webkit-text-stroke:0.2px #264353">2022 November</div>
<div class="a t" style="left:94.2px;top:131.00px;font-size:9.4px;line-height:9.4px;font-weight:normal;color:#264353;letter-spacing:-0.14px;-webkit-text-stroke:0.2px #264353">2022 October</div>
<div class="a t" style="left:104px;top:149.75px;font-size:9.4px;line-height:9.4px;font-weight:normal;color:#264353;letter-spacing:-0.14px;-webkit-text-stroke:0.2px #264353">Web Uploads</div>
<div class="a t" style="left:104px;top:168.50px;font-size:9.4px;line-height:9.4px;font-weight:normal;color:#264353;letter-spacing:-0.14px;-webkit-text-stroke:0.2px #264353">Cloud Collections</div>
<div class="a t" style="left:94.2px;top:187.25px;font-size:9.4px;line-height:9.4px;font-weight:normal;color:#264353;letter-spacing:-0.14px;-webkit-text-stroke:0.2px #264353">2022 September</div>
<div class="a t" style="left:94.2px;top:206.00px;font-size:9.4px;line-height:9.4px;font-weight:normal;color:#264353;letter-spacing:-0.14px;-webkit-text-stroke:0.2px #264353">2022 August</div>
<div class="a t" style="left:94.2px;top:224.75px;font-size:9.4px;line-height:9.4px;font-weight:normal;color:#264353;letter-spacing:-0.14px;-webkit-text-stroke:0.2px #264353">2022 July</div>
<div class="a t" style="left:94.2px;top:243.50px;font-size:9.4px;line-height:9.4px;font-weight:normal;color:#264353;letter-spacing:-0.14px;-webkit-text-stroke:0.2px #264353">2022 June</div>
<div class="a t" style="left:94.2px;top:262.25px;font-size:9.4px;line-height:9.4px;font-weight:normal;color:#264353;letter-spacing:-0.14px;-webkit-text-stroke:0.2px #264353">2022 May</div>
<div class="a t" style="left:94.2px;top:281.00px;font-size:9.4px;line-height:9.4px;font-weight:normal;color:#264353;letter-spacing:-0.14px;-webkit-text-stroke:0.2px #264353">2022 April</div>
<div class="a t" style="left:94.2px;top:299.75px;font-size:9.4px;line-height:9.4px;font-weight:normal;color:#264353;letter-spacing:-0.14px;-webkit-text-stroke:0.2px #264353">2022 March</div>
<div class="a t" style="left:94.2px;top:318.50px;font-size:9.4px;line-height:9.4px;font-weight:normal;color:#264353;letter-spacing:-0.14px;-webkit-text-stroke:0.2px #264353">2022 February</div>
<div class="a t" style="left:94.2px;top:337.25px;font-size:9.4px;line-height:9.4px;font-weight:normal;color:#264353;letter-spacing:-0.14px;-webkit-text-stroke:0.2px #264353">2022 January</div>
<div class="a t" style="left:94.2px;top:356.00px;font-size:9.4px;line-height:9.4px;font-weight:normal;color:#264353;letter-spacing:-0.14px;-webkit-text-stroke:0.2px #264353">2021 December</div>
<div class="a t" style="left:94.2px;top:374.75px;font-size:9.4px;line-height:9.4px;font-weight:normal;color:#264353;letter-spacing:-0.14px;-webkit-text-stroke:0.2px #264353">2021 October</div>
<div class="a t" style="left:94.2px;top:393.50px;font-size:9.4px;line-height:9.4px;font-weight:normal;color:#264353;letter-spacing:-0.14px;-webkit-text-stroke:0.2px #264353">2021 September</div>
<div class="a t" style="left:109.5px;top:528.25px;font-size:7.2px;line-height:7.2px;font-weight:normal;color:#42596a;letter-spacing:-0.003px;">Not started (0)</div>
<div class="a t" style="left:172.8px;top:528.25px;font-size:7.2px;line-height:7.2px;font-weight:normal;color:#42596a;letter-spacing:-0.103px;">In progress (0)</div>
<div class="a t" style="left:110.9px;top:538.15px;font-size:7.2px;line-height:7.2px;font-weight:normal;color:#42596a;letter-spacing:-0.010px;">Completed (987)</div>
<div class="a t" style="left:182px;top:538.15px;font-size:7.2px;line-height:7.2px;font-weight:normal;color:#42596a;letter-spacing:0.023px;">Error (201)</div>
<div class="a t" style="left:112.3px;top:548.15px;font-size:7.2px;line-height:7.2px;font-weight:normal;color:#42596a;letter-spacing:-0.020px;">Canceled (21)</div>
<div class="a t" style="left:174.2px;top:548.15px;font-size:7.2px;line-height:7.2px;font-weight:normal;color:#42596a;letter-spacing:-0.127px;">Canceling (0)</div>
<div class="a t" style="left:94.9px;top:558.35px;font-size:7.2px;line-height:7.2px;font-weight:normal;color:#42596a;letter-spacing:0.062px;">Completed with error (103)</div>
<div class="a t" style="left:200.7px;top:558.35px;font-size:7.2px;line-height:7.2px;font-weight:normal;color:#42596a;letter-spacing:-0.217px;">Paused (0)</div>
<div class="a t" style="left:144.9px;top:568.25px;font-size:7.2px;line-height:7.2px;font-weight:normal;color:#42596a;letter-spacing:-0.080px;">In queue (0)</div>
<div class="a t" style="left:291px;top:48.81px;font-size:9.3px;line-height:9.3px;font-weight:normal;color:#1168f2;letter-spacing:-0.185px;-webkit-text-stroke:0.25px #1168f2">Search Result</div>
<div class="a t" style="left:353px;top:48.81px;font-size:9.3px;line-height:9.3px;font-weight:normal;color:#1168f2;letter-spacing:-0.003px;-webkit-text-stroke:0.2px #1168f2">[ 0 ]</div>
<div class="a t" style="left:283.75px;top:74.92px;font-size:8.6px;line-height:8.6px;font-weight:normal;color:#1e6bef;letter-spacing:-0.390px;">Advanced Search</div>
<div class="a t" style="left:370.75px;top:74.92px;font-size:8.6px;line-height:8.6px;font-weight:normal;color:#1e6bef;letter-spacing:-0.116px;">Content</div>
<div class="a t" style="left:426px;top:74.64px;font-size:9.1px;line-height:9.1px;font-weight:normal;color:#5f6870;letter-spacing:-0.030px;">Search content and press enter</div>
<div class="a t" style="left:942px;top:74.92px;font-size:8.6px;line-height:8.6px;font-weight:normal;color:#6b737a;letter-spacing:-0.172px;">Include Family</div>
<div class="a t" style="left:1015.5px;top:74.92px;font-size:8.6px;line-height:8.6px;font-weight:normal;color:#5e666d;letter-spacing:-0.120px;">Drill Down :</div>
<div class="a t" style="left:1130.8px;top:75.58px;font-size:8.9px;line-height:8.9px;font-weight:bold;color:#ffffff;letter-spacing:-0.578px;">Actions</div>
<div class="a t" style="left:294.5px;top:104.52px;font-size:8.6px;line-height:8.6px;font-weight:normal;color:#1f2b35;letter-spacing:0.312px;">All</div>
<div class="a t" style="left:319.5px;top:104.52px;font-size:8.6px;line-height:8.6px;font-weight:normal;color:#1f2b35;letter-spacing:-0.042px;">View :</div>
<div class="a t" style="left:344.5px;top:104.52px;font-size:8.6px;line-height:8.6px;font-weight:normal;color:#1e6bef;letter-spacing:-0.109px;">Default view</div>
<div class="a t" style="left:950.75px;top:103.52px;font-size:8.6px;line-height:8.6px;font-weight:normal;color:#6a7178;letter-spacing:-0.020px;">Sort Order:</div>
<div class="a t" style="left:1000.5px;top:103.96px;font-size:8.4px;line-height:8.4px;font-weight:normal;color:#ffffff;">1</div>
<div class="a t" style="left:1050.75px;top:103.92px;font-size:8.6px;line-height:8.6px;font-weight:normal;color:#1e6bef;letter-spacing:-0.224px;">Expand Result</div>
<div class="a t" style="left:303.7px;top:133.14px;font-size:6.6px;line-height:6.6px;font-weight:normal;color:#2a3640;letter-spacing:0.155px;-webkit-text-stroke:0.2px #2a3640">NO</div>
<div class="a t" style="left:395px;top:133.34px;font-size:6.6px;line-height:6.6px;font-weight:normal;color:#1e6bef;letter-spacing:0.120px;-webkit-text-stroke:0.2px #1e6bef">DOC ID</div>
<div class="a t" style="left:563.2px;top:133.24px;font-size:6.6px;line-height:6.6px;font-weight:normal;color:#1e6bef;">1</div>
<div class="a t" style="left:582.9px;top:133.14px;font-size:6.6px;line-height:6.6px;font-weight:normal;color:#2a3640;letter-spacing:0.121px;-webkit-text-stroke:0.2px #2a3640">FILE NAME  / SUBJECT</div>
<div class="a t" style="left:738.3px;top:133.14px;font-size:6.6px;line-height:6.6px;font-weight:normal;color:#2a3640;letter-spacing:0.045px;-webkit-text-stroke:0.2px #2a3640">FILE EXTENSION</div>
<div class="a t" style="left:813.7px;top:133.14px;font-size:6.6px;line-height:6.6px;font-weight:normal;color:#2a3640;letter-spacing:0.234px;-webkit-text-stroke:0.2px #2a3640">ORIGINAL EXT...</div>
<div class="a t" style="left:889px;top:133.14px;font-size:6.6px;line-height:6.6px;font-weight:normal;color:#2a3640;letter-spacing:0.051px;-webkit-text-stroke:0.2px #2a3640">DOC DATE</div>
<div class="a t" style="left:303.3px;top:155.66px;font-size:9.0px;line-height:9.0px;font-weight:normal;color:#223543;-webkit-text-stroke:0.2px #223543">1</div>
<div class="a t" style="left:393.9px;top:155.38px;font-size:9.5px;line-height:9.5px;font-weight:normal;color:#223a4a;letter-spacing:-0.024px;-webkit-text-stroke:0.3px #223a4a">WS05083_DS00001_00000001</div>
<div class="a t" style="left:583.75px;top:155.72px;font-size:8.6px;line-height:8.6px;font-weight:normal;color:#697b87;letter-spacing:-0.073px;">Outlook Sample Email Thread_ PST..</div>
<div class="a t" style="left:739px;top:155.72px;font-size:8.6px;line-height:8.6px;font-weight:normal;color:#697b87;">.zip</div>
<div class="a t" style="left:817.5px;top:155.72px;font-size:8.6px;line-height:8.6px;font-weight:normal;color:#697b87;">.zip</div>
<div class="a t" style="left:891.5px;top:155.56px;font-size:9.0px;line-height:9.0px;font-weight:normal;color:#657a88;letter-spacing:0.345px;">01/06/2021</div>
<div class="a t" style="left:303.3px;top:180.61px;font-size:9.0px;line-height:9.0px;font-weight:normal;color:#223543;-webkit-text-stroke:0.2px #223543">2</div>
<div class="a t" style="left:393.9px;top:180.33px;font-size:9.5px;line-height:9.5px;font-weight:normal;color:#223a4a;letter-spacing:-0.024px;-webkit-text-stroke:0.3px #223a4a">WS05083_DS00002_00000001</div>
<div class="a t" style="left:583.75px;top:180.67px;font-size:8.6px;line-height:8.6px;font-weight:normal;color:#697b87;letter-spacing:-0.082px;">Sample Email Thread.rar</div>
<div class="a t" style="left:739px;top:180.67px;font-size:8.6px;line-height:8.6px;font-weight:normal;color:#697b87;">.rar</div>
<div class="a t" style="left:817.5px;top:180.67px;font-size:8.6px;line-height:8.6px;font-weight:normal;color:#697b87;">.rar</div>
<div class="a t" style="left:891.5px;top:180.51px;font-size:9.0px;line-height:9.0px;font-weight:normal;color:#657a88;letter-spacing:0.345px;">01/08/2021</div>
<div class="a t" style="left:303.3px;top:205.51px;font-size:9.0px;line-height:9.0px;font-weight:normal;color:#223543;-webkit-text-stroke:0.2px #223543">3</div>
<div class="a t" style="left:393.9px;top:205.23px;font-size:9.5px;line-height:9.5px;font-weight:normal;color:#223a4a;letter-spacing:-0.024px;-webkit-text-stroke:0.3px #223a4a">WS05083_DS00002_00000002</div>
<div class="a t" style="left:583.75px;top:205.57px;font-size:8.6px;line-height:8.6px;font-weight:normal;color:#697b87;letter-spacing:-0.123px;">Sample Email Thread.pst</div>
<div class="a t" style="left:739px;top:205.57px;font-size:8.6px;line-height:8.6px;font-weight:normal;color:#697b87;">.pat</div>
<div class="a t" style="left:817.5px;top:205.57px;font-size:8.6px;line-height:8.6px;font-weight:normal;color:#697b87;">.pst</div>
<div class="a t" style="left:891.5px;top:205.41px;font-size:9.0px;line-height:9.0px;font-weight:normal;color:#657a88;letter-spacing:0.345px;">03/06/2020</div>
<div class="a t" style="left:303.3px;top:230.41px;font-size:9.0px;line-height:9.0px;font-weight:normal;color:#223543;-webkit-text-stroke:0.2px #223543">4</div>
<div class="a t" style="left:393.9px;top:230.13px;font-size:9.5px;line-height:9.5px;font-weight:normal;color:#223a4a;letter-spacing:-0.024px;-webkit-text-stroke:0.3px #223a4a">WS05083_DS00003_00000001</div>
<div class="a t" style="left:583.75px;top:230.47px;font-size:8.6px;line-height:8.6px;font-weight:normal;color:#697b87;letter-spacing:-0.082px;">Sample Email Thread.rar</div>
<div class="a t" style="left:739px;top:230.47px;font-size:8.6px;line-height:8.6px;font-weight:normal;color:#697b87;">.rar</div>
<div class="a t" style="left:817.5px;top:230.47px;font-size:8.6px;line-height:8.6px;font-weight:normal;color:#697b87;">.rar</div>
<div class="a t" style="left:891.5px;top:230.31px;font-size:9.0px;line-height:9.0px;font-weight:normal;color:#657a88;letter-spacing:0.345px;">01/08/2021</div>
<div class="a t" style="left:303.3px;top:255.31px;font-size:9.0px;line-height:9.0px;font-weight:normal;color:#223543;-webkit-text-stroke:0.2px #223543">5</div>
<div class="a t" style="left:393.9px;top:255.03px;font-size:9.5px;line-height:9.5px;font-weight:normal;color:#223a4a;letter-spacing:-0.024px;-webkit-text-stroke:0.3px #223a4a">WS05083_DS00003_00000002</div>
<div class="a t" style="left:583.75px;top:255.37px;font-size:8.6px;line-height:8.6px;font-weight:normal;color:#697b87;letter-spacing:-0.123px;">Sample Email Thread.pst</div>
<div class="a t" style="left:739px;top:255.37px;font-size:8.6px;line-height:8.6px;font-weight:normal;color:#697b87;">.pst</div>
<div class="a t" style="left:817.5px;top:255.37px;font-size:8.6px;line-height:8.6px;font-weight:normal;color:#697b87;">.pst</div>
<div class="a t" style="left:891.5px;top:255.21px;font-size:9.0px;line-height:9.0px;font-weight:normal;color:#657a88;letter-spacing:0.345px;">03/06/2020</div>
<div class="a t" style="left:303.0px;top:280.31px;font-size:9.0px;line-height:9.0px;font-weight:normal;color:#223543;-webkit-text-stroke:0.2px #223543">6</div>
<div class="a t" style="left:393.4px;top:280.03px;font-size:9.5px;line-height:9.5px;font-weight:normal;color:#223a4a;letter-spacing:-0.024px;-webkit-text-stroke:0.3px #223a4a">WS05083_DS00003_00000003</div>
<div class="a t" style="left:583.75px;top:280.37px;font-size:8.6px;line-height:8.6px;font-weight:normal;color:#697b87;letter-spacing:-0.149px;">Re Email Thread Sample.msg</div>
<div class="a t" style="left:739px;top:280.37px;font-size:8.6px;line-height:8.6px;font-weight:normal;color:#697b87;">.msg</div>
<div class="a t" style="left:817.5px;top:280.37px;font-size:8.6px;line-height:8.6px;font-weight:normal;color:#697b87;">.msg</div>
<div class="a t" style="left:891.5px;top:280.21px;font-size:9.0px;line-height:9.0px;font-weight:normal;color:#657a88;letter-spacing:0.345px;">03/05/2020</div>
<div class="a t" style="left:302.5px;top:305.51px;font-size:9.0px;line-height:9.0px;font-weight:normal;color:#223543;-webkit-text-stroke:0.2px #223543">7</div>
<div class="a t" style="left:393.3px;top:305.23px;font-size:9.5px;line-height:9.5px;font-weight:normal;color:#223a4a;letter-spacing:-0.024px;-webkit-text-stroke:0.3px #223a4a">WS05083_DS00003_00000004</div>
<div class="a t" style="left:583.75px;top:305.57px;font-size:8.6px;line-height:8.6px;font-weight:normal;color:#697b87;letter-spacing:-0.149px;">Re Email Thread Sample.msg</div>
<div class="a t" style="left:739px;top:305.57px;font-size:8.6px;line-height:8.6px;font-weight:normal;color:#697b87;">.msg</div>
<div class="a t" style="left:817.5px;top:305.57px;font-size:8.6px;line-height:8.6px;font-weight:normal;color:#697b87;">.msg</div>
<div class="a t" style="left:891.5px;top:305.41px;font-size:9.0px;line-height:9.0px;font-weight:normal;color:#657a88;letter-spacing:0.345px;">03/05/2020</div>
<div class="a t" style="left:302.8px;top:332.06px;font-size:9.0px;line-height:9.0px;font-weight:normal;color:#223543;-webkit-text-stroke:0.2px #223543">8</div>
<div class="a t" style="left:392.7px;top:331.78px;font-size:9.5px;line-height:9.5px;font-weight:normal;color:#223a4a;letter-spacing:-0.024px;-webkit-text-stroke:0.3px #223a4a">WS05083_DS00003_00000005</div>
<div class="a t" style="left:583.75px;top:332.12px;font-size:8.6px;line-height:8.6px;font-weight:normal;color:#697b87;letter-spacing:-0.132px;">RE Email Thread Sample.msg</div>
<div class="a t" style="left:739px;top:332.12px;font-size:8.6px;line-height:8.6px;font-weight:normal;color:#697b87;">.msg</div>
<div class="a t" style="left:817.5px;top:332.12px;font-size:8.6px;line-height:8.6px;font-weight:normal;color:#697b87;">.msg</div>
<div class="a t" style="left:891.5px;top:331.96px;font-size:9.0px;line-height:9.0px;font-weight:normal;color:#657a88;letter-spacing:0.345px;">03/05/2020</div>
<div class="a t" style="left:302.8px;top:358.41px;font-size:9.0px;line-height:9.0px;font-weight:normal;color:#223543;-webkit-text-stroke:0.2px #223543">9</div>
<div class="a t" style="left:393.2px;top:358.13px;font-size:9.5px;line-height:9.5px;font-weight:normal;color:#223a4a;letter-spacing:-0.024px;-webkit-text-stroke:0.3px #223a4a">WS05083_DS00003_00000006</div>
<div class="a t" style="left:583.75px;top:358.47px;font-size:8.6px;line-height:8.6px;font-weight:normal;color:#697b87;letter-spacing:-0.149px;">Re Email Thread Sample.msg</div>
<div class="a t" style="left:739px;top:358.47px;font-size:8.6px;line-height:8.6px;font-weight:normal;color:#697b87;">.msg</div>
<div class="a t" style="left:817.5px;top:358.47px;font-size:8.6px;line-height:8.6px;font-weight:normal;color:#697b87;">.msg</div>
<div class="a t" style="left:891.5px;top:358.31px;font-size:9.0px;line-height:9.0px;font-weight:normal;color:#657a88;letter-spacing:0.345px;">03/05/2020</div>
<div class="a t" style="left:303.5px;top:382.96px;font-size:9.0px;line-height:9.0px;font-weight:normal;color:#223543;-webkit-text-stroke:0.2px #223543">10</div>
<div class="a t" style="left:394.2px;top:382.68px;font-size:9.5px;line-height:9.5px;font-weight:normal;color:#223a4a;letter-spacing:0.032px;-webkit-text-stroke:0.3px #223a4a">WS05083_DS00003_00000006.000001</div>
<div class="a t" style="left:583.75px;top:383.02px;font-size:8.6px;line-height:8.6px;font-weight:normal;color:#697b87;letter-spacing:-0.253px;">Image.jpeg</div>
<div class="a t" style="left:739px;top:383.02px;font-size:8.6px;line-height:8.6px;font-weight:normal;color:#697b87;">.jpg</div>
<div class="a t" style="left:817.5px;top:383.02px;font-size:8.6px;line-height:8.6px;font-weight:normal;color:#697b87;">.jpeg</div>
<div class="a t" style="left:891.5px;top:382.86px;font-size:9.0px;line-height:9.0px;font-weight:normal;color:#657a88;letter-spacing:0.345px;">01/08/2021</div>
<div class="a t" style="left:303.5px;top:407.71px;font-size:9.0px;line-height:9.0px;font-weight:normal;color:#223543;-webkit-text-stroke:0.2px #223543">11</div>
<div class="a t" style="left:394.2px;top:407.43px;font-size:9.5px;line-height:9.5px;font-weight:normal;color:#223a4a;letter-spacing:0.032px;-webkit-text-stroke:0.3px #223a4a">WS05083_DS00003_00000005.000002</div>
<div class="a t" style="left:583.75px;top:407.77px;font-size:8.6px;line-height:8.6px;font-weight:normal;color:#697b87;letter-spacing:-0.253px;">Image.jpeg</div>
<div class="a t" style="left:739px;top:407.77px;font-size:8.6px;line-height:8.6px;font-weight:normal;color:#697b87;">.jpg</div>
<div class="a t" style="left:817.5px;top:407.77px;font-size:8.6px;line-height:8.6px;font-weight:normal;color:#697b87;">.jpeg</div>
<div class="a t" style="left:891.5px;top:407.61px;font-size:9.0px;line-height:9.0px;font-weight:normal;color:#657a88;letter-spacing:0.345px;">01/08/2021</div>
<div class="a t" style="left:303.5px;top:434.06px;font-size:9.0px;line-height:9.0px;font-weight:normal;color:#223543;-webkit-text-stroke:0.2px #223543">12</div>
<div class="a t" style="left:394.5px;top:433.78px;font-size:9.5px;line-height:9.5px;font-weight:normal;color:#223a4a;letter-spacing:-0.024px;-webkit-text-stroke:0.3px #223a4a">WS05083_DS00003_00000007</div>
<div class="a t" style="left:583.75px;top:434.12px;font-size:8.6px;line-height:8.6px;font-weight:normal;color:#697b87;letter-spacing:-0.149px;">Re Email Thread Sample.msg</div>
<div class="a t" style="left:739px;top:434.12px;font-size:8.6px;line-height:8.6px;font-weight:normal;color:#697b87;">.msg</div>
<div class="a t" style="left:817.5px;top:434.12px;font-size:8.6px;line-height:8.6px;font-weight:normal;color:#697b87;">.msg</div>
<div class="a t" style="left:891.5px;top:433.96px;font-size:9.0px;line-height:9.0px;font-weight:normal;color:#657a88;letter-spacing:0.345px;">03/05/2020</div>
<div class="a t" style="left:302.8px;top:460.26px;font-size:9.0px;line-height:9.0px;font-weight:normal;color:#223543;-webkit-text-stroke:0.2px #223543">13</div>
<div class="a t" style="left:393.3px;top:459.98px;font-size:9.5px;line-height:9.5px;font-weight:normal;color:#223a4a;letter-spacing:-0.024px;-webkit-text-stroke:0.3px #223a4a">WS05083_DS00003_00000008</div>
<div class="a t" style="left:583.75px;top:460.32px;font-size:8.6px;line-height:8.6px;font-weight:normal;color:#697b87;letter-spacing:-0.149px;">Re Email Thread Sample.msg</div>
<div class="a t" style="left:739px;top:460.32px;font-size:8.6px;line-height:8.6px;font-weight:normal;color:#697b87;">.msg</div>
<div class="a t" style="left:817.5px;top:460.32px;font-size:8.6px;line-height:8.6px;font-weight:normal;color:#697b87;">.msg</div>
<div class="a t" style="left:891.5px;top:460.16px;font-size:9.0px;line-height:9.0px;font-weight:normal;color:#657a88;letter-spacing:0.345px;">03/05/2020</div>
<div class="a t" style="left:302.8px;top:485.86px;font-size:9.0px;line-height:9.0px;font-weight:normal;color:#223543;-webkit-text-stroke:0.2px #223543">14</div>
<div class="a t" style="left:393.3px;top:485.58px;font-size:9.5px;line-height:9.5px;font-weight:normal;color:#223a4a;letter-spacing:-0.024px;-webkit-text-stroke:0.3px #223a4a">WS05083_DS00003_00000009</div>
<div class="a t" style="left:583.75px;top:485.92px;font-size:8.6px;line-height:8.6px;font-weight:normal;color:#697b87;letter-spacing:-0.149px;">Re Email Thread Sample.msg</div>
<div class="a t" style="left:739px;top:485.92px;font-size:8.6px;line-height:8.6px;font-weight:normal;color:#697b87;">.msg</div>
<div class="a t" style="left:817.5px;top:485.92px;font-size:8.6px;line-height:8.6px;font-weight:normal;color:#697b87;">.msg</div>
<div class="a t" style="left:891.5px;top:485.76px;font-size:9.0px;line-height:9.0px;font-weight:normal;color:#657a88;letter-spacing:0.345px;">03/05/2020</div>
<div class="a t" style="left:302.8px;top:511.51px;font-size:9.0px;line-height:9.0px;font-weight:normal;color:#223543;-webkit-text-stroke:0.2px #223543">15</div>
<div class="a t" style="left:393.5px;top:511.23px;font-size:9.5px;line-height:9.5px;font-weight:normal;color:#223a4a;letter-spacing:-0.024px;-webkit-text-stroke:0.3px #223a4a">WS05083_DS00003_00000010</div>
<div class="a t" style="left:583.75px;top:511.57px;font-size:8.6px;line-height:8.6px;font-weight:normal;color:#697b87;letter-spacing:-0.149px;">Re Email Thread Sample.msg</div>
<div class="a t" style="left:739px;top:511.57px;font-size:8.6px;line-height:8.6px;font-weight:normal;color:#697b87;">.msg</div>
<div class="a t" style="left:817.5px;top:511.57px;font-size:8.6px;line-height:8.6px;font-weight:normal;color:#697b87;">.msg</div>
<div class="a t" style="left:891.5px;top:511.41px;font-size:9.0px;line-height:9.0px;font-weight:normal;color:#657a88;letter-spacing:0.345px;">03/05/2020</div>
<div class="a t" style="left:290.5px;top:562.15px;font-size:7.2px;line-height:7.2px;font-weight:bold;color:#fff;">0</div>
<div class="a t" style="left:301.8px;top:561.45px;font-size:9.7px;line-height:9.7px;font-weight:normal;color:#1b69f0;letter-spacing:-0.332px;-webkit-text-stroke:0.15px #1b69f0">File Selected</div>
<div class="a t" style="left:1027.2px;top:561.45px;font-size:9.7px;line-height:9.7px;font-weight:normal;color:#1f2b35;letter-spacing:-0.075px;">15 - 15 of 15 items</div>
</div></body></html>
